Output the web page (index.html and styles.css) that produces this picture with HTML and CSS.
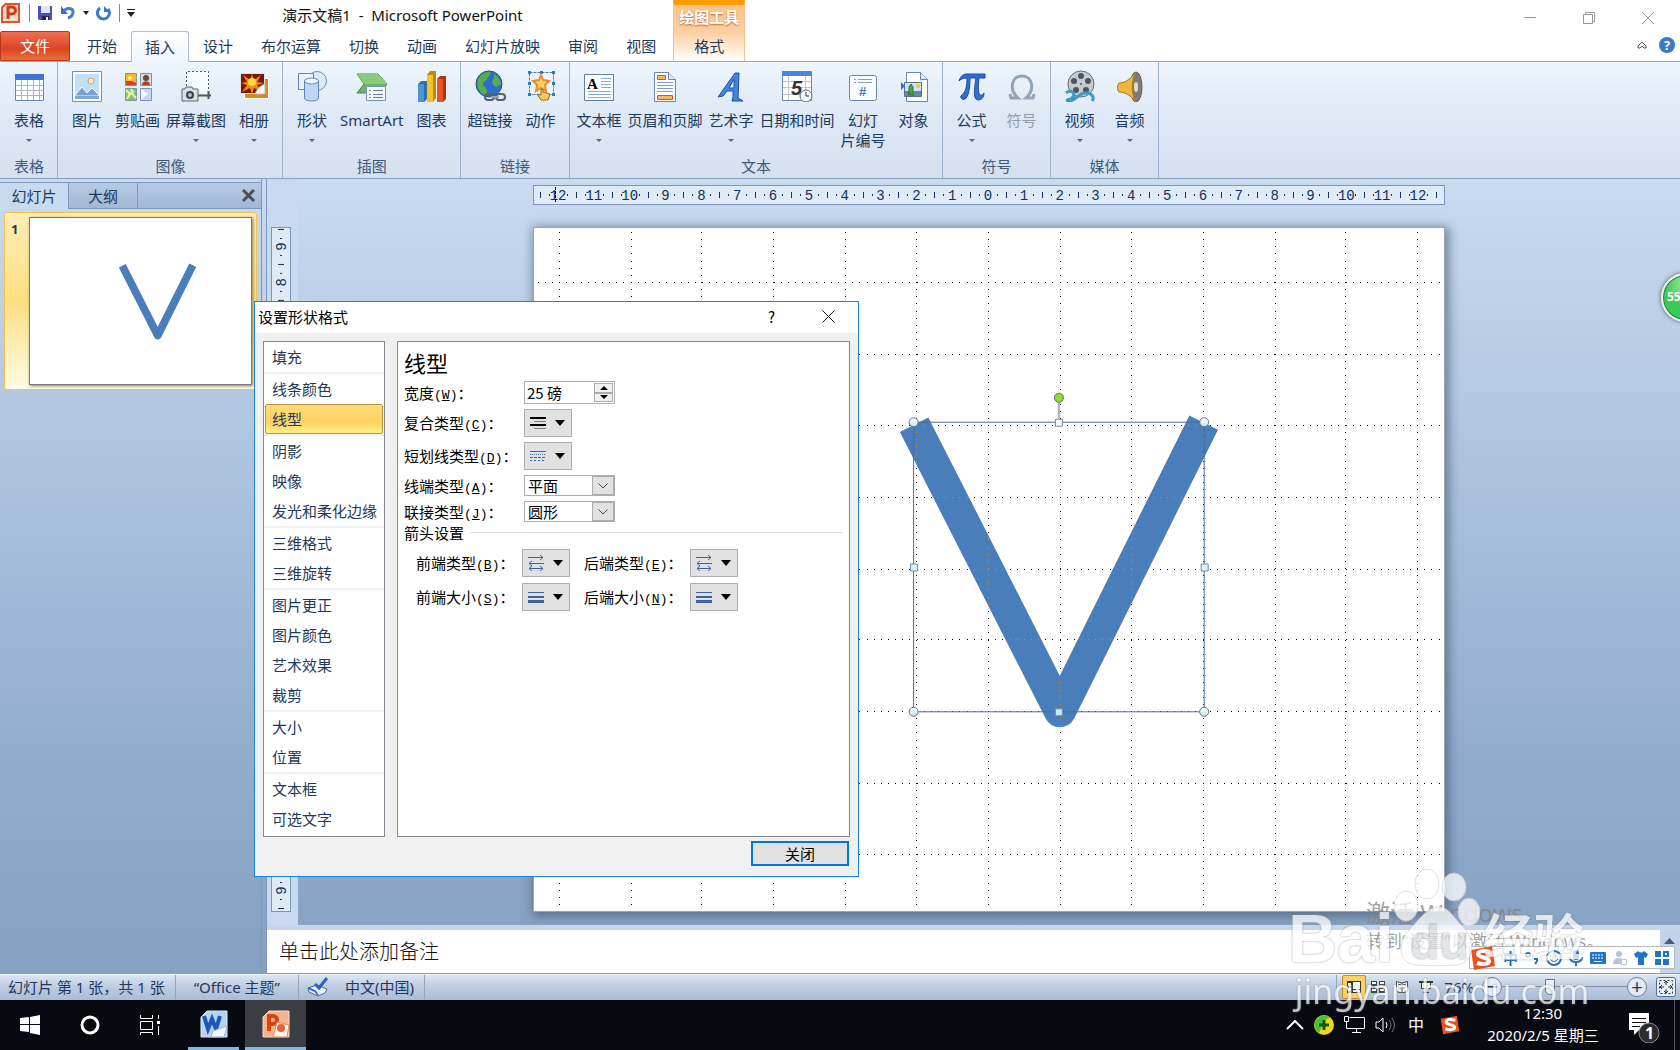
FILE: index.html
```html
<!DOCTYPE html>
<html lang="zh-CN">
<head>
    <meta charset="UTF-8">
    <meta name="viewport" content="width=device-width, initial-scale=1.0">
    <title>演示文稿1 - Microsoft PowerPoint</title>
    <link rel="stylesheet" href="styles.css">
</head>
<body>
    <header class="window-head">
        <div class="head-left">
            <div class="title-row">
                <div class="quick-access">
                    <svg width="22" height="22" viewBox="0 0 22 22"><path d="M5 1h15v20H1V5z" fill="#d9562e"/><path d="M6 3h12v16H3V6z" fill="#fbdccb"/><path d="M8 17V5h4a3 3 0 0 1 0 7H8" fill="none" stroke="#c8401a" stroke-width="3"/></svg>
                    <i class="qat-line"></i>
                    <button aria-label="保存"><svg width="16" height="16" viewBox="0 0 16 16"><path d="M1 1h14v14H2l-1-1z" fill="#4a50b8"/><path d="M4 1h9v7H4z" fill="#dfe6fa"/><path d="M5 11h7v4H5z" fill="#20245a"/><path d="M9 12h2v3H9z" fill="#fff"/></svg></button>
                    <button aria-label="撤消"><svg width="16" height="16" viewBox="0 0 16 16"><path d="M1 1v8h7z" fill="#3c6cc4"/><path d="M4 6c3-4 9-3 9 1 0 3-2 5-5 6" fill="none" stroke="#4a7ad0" stroke-width="3"/></svg></button>
                    <svg width="6" height="4" viewBox="0 0 6 4"><path d="M0 0h6L3 4z" fill="#222"/></svg>
                    <button aria-label="恢复"><svg width="16" height="16" viewBox="0 0 16 16"><path d="M4 3a6 6 0 1 0 8 1" fill="none" stroke="#3c78d0" stroke-width="3"/><path d="M8 1v6h6z" fill="#3c78d0"/></svg></button>
                    <i class="qat-line"></i>
                    <svg width="8" height="8" viewBox="0 0 8 8"><path d="M0 0h8v1H0zM0 3h8L4 8z" fill="#222"/></svg>
                </div>
                <h1 class="doc-title">演示文稿1&nbsp; -&nbsp; Microsoft PowerPoint</h1>
            </div>
            <nav class="tabs">
                <button class="tab tab-file">文件</button>
                <button class="tab">开始</button>
                <button class="tab tab-active">插入</button>
                <button class="tab">设计</button>
                <button class="tab">布尔运算</button>
                <button class="tab">切换</button>
                <button class="tab">动画</button>
                <button class="tab">幻灯片放映</button>
                <button class="tab">审阅</button>
                <button class="tab">视图</button>
            </nav>
        </div>
        <div class="context-tab">
            <span class="context-name">绘图工具</span>
            <button class="tab">格式</button>
        </div>
        <div class="head-right">
            <div class="window-buttons">
                <button aria-label="最小化"><svg width="12" height="12" viewBox="0 0 12 12"><path d="M0 5.500h12" stroke="#999"/></svg></button>
                <button aria-label="还原"><svg width="12" height="12" viewBox="0 0 12 12"><path d="M.5 2.500h9v9h-9zM2.500 2V.5h9v9H10" fill="none" stroke="#999"/></svg></button>
                <button aria-label="关闭窗口"><svg width="12" height="12" viewBox="0 0 12 12"><path d="M0 0l12 12M12 0L0 12" stroke="#999"/></svg></button>
            </div>
            <div class="help-buttons">
                <button aria-label="功能区最小化"><svg width="10" height="8" viewBox="0 0 10 8"><path d="M1 5l4-4 4 4v2H7L5 5 3 7H1z" fill="#fff" stroke="#555"/></svg></button>
                <button aria-label="帮助" class="help">?</button>
            </div>
        </div>
    </header>

    <!-- Ribbon -->
    <div class="ribbon">
        <section class="group">
            <div class="tools">
                <button class="tool">
                    <svg viewBox="0 0 32 32"><path d="M2.500 4.500h28v26h-28z" fill="#fff" stroke="#6b86ad"/><path d="M2 4h29v6H2z" fill="#3f76d6"/><path d="M8.500 10v20M14.500 10v20M20.500 10v20M26.500 10v20M3 15.500h27M3 20.500h27M3 25.500h27" stroke="#a9b4c6"/></svg>
                    <span>表格</span><i class="drop"></i>
                </button>
            </div>
            <h2>表格</h2>
        </section>
        <section class="group">
            <div class="tools">
                <button class="tool">
                    <svg viewBox="0 0 32 32"><path d="M1.500 1.500h29v30h-29z" fill="#fff" stroke="#6d92ae"/><path d="M4 4h24v25H4z" fill="#bfe0fb"/><circle cx="20" cy="11" r="3" fill="#fff4d8" stroke="#f09a50"/><path d="M4 25l7-8 5 6 5-5 7 7v1H4z" fill="#7d9ed8" stroke="#fff"/><path d="M4 26h24v3H4z" fill="#7ea9d6"/></svg>
                    <span>图片</span>
                </button>
                <button class="tool">
                    <svg viewBox="0 0 32 32"><path d="M3.500 3.500h11v12h-11z" fill="#ffb51f" stroke="#7e92aa"/><path d="M4 11h6l4 2v2H4z" fill="#d1401f"/><circle cx="8" cy="8" r="2" fill="#fff1a0"/><path d="M18.500 3.500h11v12h-11z" fill="#d9d9d9" stroke="#7e92aa"/><circle cx="24" cy="8" r="3" fill="#6e4a33"/><path d="M20 15c0-5 8-5 8 0z" fill="#b33b2a"/><path d="M3.500 18.500h11v12h-11z" fill="#7bbf77" stroke="#7e92aa"/><path d="M4 20l4 4-3 5M9 19l2 6 3 3M6 26l6-5" stroke="#f5efa0" stroke-width="2" fill="none"/><path d="M18.500 18.500h11v12h-11z" fill="#c4d5f7" stroke="#7e92aa"/><path d="M19 19l7 5-7 6z" fill="#f4f8ff"/></svg>
                    <span>剪贴画</span>
                </button>
                <button class="tool">
                    <svg viewBox="0 0 32 32"><path d="M6.500 16V1.500h22V25" fill="#f6f9fd" stroke="#555" stroke-dasharray="2 2"/><path d="M18 25.500h13M28.500 21v8" stroke="#555" stroke-width="2"/><path d="M2 19h3l1-2h6l1 2h5v12H2z" fill="#dadfe5" stroke="#5a6472"/><circle cx="10" cy="25" r="4" fill="#39424e"/><circle cx="10" cy="25" r="2" fill="#a9c0d8"/></svg>
                    <span>屏幕截图</span><i class="drop"></i>
                </button>
                <button class="tool">
                    <svg viewBox="0 0 32 32"><path d="M6.500 8.500h24v20h-24z" fill="#d98a1e" stroke="#fff"/><path d="M2.500 3.500h24v20h-24z" fill="#7a1a08" stroke="#dfe5ee"/><path d="M14 4l2 6 7-5-4 7 7 1-7 2 5 7-8-4-2 6-2-6-8 4 5-7-6-2 6-1-4-7 7 5z" fill="#f08a13"/><circle cx="14" cy="12" r="4" fill="#ffd83b"/><path d="M17 24q3-8 10-10v10z" fill="#f8f8f8" stroke="#bbb"/></svg>
                    <span>相册</span><i class="drop"></i>
                </button>
            </div>
            <h2>图像</h2>
        </section>
        <section class="group">
            <div class="tools">
                <button class="tool">
                    <svg viewBox="0 0 32 32"><circle cx="21" cy="11" r="9.500" fill="#dcebfa" stroke="#6b8fb8"/><path d="M2.500 3.500h15v16h-15z" fill="#eaf3fd" stroke="#5d84b4"/><path d="M8.500 11v17c0 4 14 4 14 0V11" fill="#bcd7f3" stroke="#5d84b4"/><ellipse cx="15.500" cy="11" rx="7" ry="3" fill="#eef6ff" stroke="#5d84b4"/></svg>
                    <span>形状</span><i class="drop"></i>
                </button>
                <button class="tool">
                    <svg viewBox="0 0 32 32"><path d="M1 4h21l9 10-7 9H1l7-9z" fill="#6fb463" stroke="#48893f"/><path d="M1 4h21l9 10H8z" fill="#8cc97e"/><path d="M10.500 16.500h19v14h-19z" fill="#f3f7fb" stroke="#7d92a8"/><path d="M13 20.500h2M17 20.500h10M13 24.500h2M17 24.500h10M13 27.500h2M17 27.500h10" stroke="#6d839b"/></svg>
                    <span>SmartArt</span>
                </button>
                <button class="tool">
                    <svg viewBox="0 0 32 32"><path d="M2 14l3-3h6v18l-3 3H2z" fill="#2e6fad"/><path d="M2 14h6v18H2z" fill="#4d93d1"/><path d="M11 5l3-4h6v27l-3 4h-6z" fill="#b98c0c"/><path d="M11 5h6v27h-6z" fill="#f3c321"/><path d="M21 9l3-3h6v23l-3 3h-6z" fill="#b7300f"/><path d="M21 9h6v23h-6z" fill="#e8542a"/></svg>
                    <span>图表</span>
                </button>
            </div>
            <h2>插图</h2>
        </section>
        <section class="group">
            <div class="tools">
                <button class="tool">
                    <svg viewBox="0 0 32 32"><circle cx="15" cy="14" r="13" fill="#2c6fcb" stroke="#2a4f7c"/><path d="M4 9c3-6 8-7 12-7 2 3-2 4-3 7s-4 2-4 5 4 3 4 7-2 4-3 4C5 22 2 16 4 9zM20 4c5 3 7 7 7 10l-5 3c-4-2-5-6-2-9z" fill="#58ad4e"/><rect x="11" y="24" width="9" height="6" rx="3" fill="none" stroke="#55606e" stroke-width="2"/><rect x="22" y="24" width="9" height="6" rx="3" fill="none" stroke="#55606e" stroke-width="2"/><path d="M17 27h8" stroke="#9aa6b4" stroke-width="2"/></svg>
                    <span>超链接</span>
                </button>
                <button class="tool">
                    <svg viewBox="0 0 32 32"><path d="M4.500 2.500h24v22h-24z" fill="#eef4fb" stroke="#4f7ea8" stroke-dasharray="3 1"/><path d="M3 1h3v3H3zM15 1h3v3h-3zM27 1h3v3h-3zM3 12h3v3H3zM27 12h3v3h-3zM3 23h3v3H3zM27 23h3v3h-3z" fill="#1f7fc4"/><path d="M16 5l2 5 6 1-4 4 1 6-5-3-5 3 1-6-4-4 6-1z" fill="#ffd45e" stroke="#ee8a2e" stroke-width="2"/><path d="M16 19v6l-4-1 4 6h7l2-6-7-2v-3z" fill="#f6c95c" stroke="#94691b"/></svg>
                    <span>动作</span>
                </button>
            </div>
            <h2>链接</h2>
        </section>
        <section class="group">
            <div class="tools">
                <button class="tool">
                    <svg viewBox="0 0 32 32"><path d="M1.500 4.500h29v26h-29z" fill="#fbfdff" stroke="#62809f"/><text x="4" y="19" class="ico-serif">A</text><path d="M18 8.500h10M18 11.500h10M18 14.500h10M18 17.500h10M5 21.500h23M5 24.500h23M5 27.500h23" stroke="#8ea9ce"/></svg>
                    <span>文本框</span><i class="drop"></i>
                </button>
                <button class="tool">
                    <svg viewBox="0 0 32 32"><path d="M5.500 2.500h14l7 7v22h-21z" fill="#fcfdff" stroke="#6a87a8"/><path d="M19.500 2.500v7h7" fill="#dfe9f5" stroke="#6a87a8"/><path d="M8.500 5.500h8v4h-8zM8.500 25.500h15v4h-15z" fill="#fbb860" stroke="#cf5a12"/><path d="M8 12.500h16M8 15.500h16M8 18.500h16M8 21.500h16" stroke="#7f9cc9"/></svg>
                    <span>页眉和页脚</span>
                </button>
                <button class="tool">
                    <svg viewBox="0 0 32 32"><path d="M3 27L20 3h4l-1 25 5 3H17l1-4v-6h-6l-4 5zM14 18h5V9z" fill="#3f86e0" stroke="#1f4f9e" fill-rule="evenodd"/></svg>
                    <span>艺术字</span><i class="drop"></i>
                </button>
                <button class="tool">
                    <svg viewBox="0 0 32 32"><path d="M1.500 1.500h29v29h-29z" fill="#fff" stroke="#7088a8"/><path d="M1 1h29v5H1z" fill="#4b84de"/><path d="M7.500 6v24M24.500 6v24M2 11.500h28M2 17.500h28M2 24.500h28" stroke="#bcc5d2"/><text x="10" y="25" class="ico-five">5</text><circle cx="25" cy="26" r="6" fill="#f4f8fc" stroke="#5c6d83"/><path d="M25 22v4h3" fill="none" stroke="#333"/></svg>
                    <span>日期和时间</span>
                </button>
                <button class="tool">
                    <svg viewBox="0 0 32 32"><rect x="2.500" y="5.500" width="27" height="25" rx="2" fill="#f8fbff" stroke="#6a86ac"/><path d="M7 9.500h2M11 9.500h14M7 12.500h2M11 12.500h14" stroke="#8a9bb5"/><text x="12" y="26" class="ico-hash">#</text></svg>
                    <span>幻灯<br>片编号</span>
                </button>
                <button class="tool">
                    <svg viewBox="0 0 32 32"><path d="M8.500 2.500h14l7 7v22h-21z" fill="#fcfdff" stroke="#6a87a8"/><path d="M22.500 2.500v7h7" fill="#dfe9f5" stroke="#6a87a8"/><path d="M6.500 12.500h17v14h-17z" fill="#cfe3fb" stroke="#54708e"/><path d="M7 21h16v5H7z" fill="#6885a8"/><circle cx="20" cy="16" r="2" fill="#f2c229"/><path d="M11 26v-9l2-3 2 3v9l-5-4" fill="#48a846" stroke="#2c6e36"/><path d="M3 12l4 4-4 4z" fill="#2f6ed0"/></svg>
                    <span>对象</span>
                </button>
            </div>
            <h2>文本</h2>
        </section>
        <section class="group">
            <div class="tools">
                <button class="tool">
                    <svg viewBox="0 0 32 32"><path d="M3 11c2-6 5-7 8-7h18v4h-6c-1 9-1 15 1 17 2 1 3-1 4-2 0 5-3 7-6 7-5-1-4-9-2-22h-6c0 12-2 19-5 21-3 1-5-1-4-3 5-4 6-10 6-18-4 0-6 1-8 3z" fill="#2f6ed0" stroke="#1e4c9c"/></svg>
                    <span>公式</span><i class="drop"></i>
                </button>
                <button class="tool tool-off" disabled>
                    <svg viewBox="0 0 32 32"><path d="M4 24l1 4h7c-9-8-7-22 4-22s13 14 4 22h7l1-4" fill="none" stroke="#93a3b8" stroke-width="3"/></svg>
                    <span>符号</span>
                </button>
            </div>
            <h2>符号</h2>
        </section>
        <section class="group">
            <div class="tools">
                <button class="tool">
                    <svg viewBox="0 0 32 32"><circle cx="17" cy="14" r="13" fill="#c6cbd1" stroke="#5f6870"/><g fill="#4c555e"><circle cx="17" cy="6" r="3"/><circle cx="24" cy="11" r="3"/><circle cx="22" cy="20" r="3"/><circle cx="12" cy="20" r="3"/><circle cx="10" cy="11" r="3"/><circle cx="17" cy="14" r="1"/></g><path d="M2 23c5-4 10 0 7 4s-8 2-5 4c8 1 10-8 17-8s10 4 7 8" fill="none" stroke="#4597c4" stroke-width="3"/></svg>
                    <span>视频</span><i class="drop"></i>
                </button>
                <button class="tool">
                    <svg viewBox="0 0 32 32"><ellipse cx="22" cy="17" rx="6" ry="15" fill="#7e7b78" stroke="#6a5b3c"/><path d="M5 13c7 0 12-5 17-11-5 8-5 22 0 30-5-6-10-10-17-10-2-2-2-7 0-9z" fill="#eeb63f" stroke="#a8791c"/><ellipse cx="22" cy="17" rx="2" ry="5" fill="#dedbd4"/></svg>
                    <span>音频</span><i class="drop"></i>
                </button>
            </div>
            <h2>媒体</h2>
        </section>
    </div>

    <!-- Work area -->
    <main class="work">
        <aside class="slides-pane">
            <div class="pane-tabs">
                <button class="pane-tab pane-tab-active">幻灯片</button>
                <button class="pane-tab">大纲</button>
                <button class="pane-close" aria-label="关闭窗格"><svg width="13" height="13" viewBox="0 0 13 13"><path d="M1 1l11 11M12 1L1 12" stroke="#4a4f57" stroke-width="3"/></svg></button>
            </div>
            <div class="thumb-row">
                <span class="thumb-num">1</span>
                <svg class="thumb" viewBox="0 0 910 684"><use href="#shape-v"/></svg>
            </div>
        </aside>
        <div class="editor">
            <div class="editor-grid">
                <div class="ruler-strip"></div>
                <svg class="ruler-h" id="ruler-h" viewBox="0 0 910 18"></svg>
                <svg class="ruler-v" id="ruler-v" viewBox="0 0 18 684"></svg>
                <svg class="slide" viewBox="0 0 910 684">
                    <defs>
                        <polyline id="shape-v" points="380,197 526,484 670,195" fill="none" stroke="#4a7ebb" stroke-width="32" stroke-linejoin="round"/>
                        <g id="grid-lines" stroke-dasharray="1 6.160" shape-rendering="crispEdges"></g>
                        <mask id="v-mask"><polyline points="380,197 526,484 670,195" fill="none" stroke="#fff" stroke-width="32" stroke-linejoin="round"/></mask>
                        <linearGradient id="handle" x2="0" y2="1"><stop offset="0" stop-color="#fff"/><stop offset="1" stop-color="#bfe9f2"/></linearGradient>
                    </defs>
                    <use href="#grid-lines" stroke="#000"/>
                    <use href="#shape-v"/>
                    <g mask="url(#v-mask)"><use href="#grid-lines" stroke="#d98a1f"/></g>
                    <path d="M379.500 194.500h291v290h-291z" fill="none" stroke="#4a6c9b"/>
                    <path d="M525 175v16" stroke="#9fb4cc" stroke-width="2"/>
                    <circle cx="525" cy="170" r="4.500" fill="#8be02a" stroke="#5d6670"/>
                    <g fill="url(#handle)" stroke="#66727e">
                        <circle cx="379.500" cy="194.500" r="4.500"/><circle cx="670.500" cy="194.500" r="4.500"/>
                        <circle cx="379.500" cy="484.500" r="4.500"/><circle cx="670.500" cy="484.500" r="4.500"/>
                    </g>
                    <g fill="url(#handle)" stroke="#6d8ba8">
                        <path d="M521.500 191.500h7v7h-7zM376.500 336.500h7v7h-7zM667.500 336.500h7v7h-7zM521.500 481.500h7v7h-7z"/>
                    </g>
                </svg>
            </div>
            <div class="notes">
                <p>单击此处添加备注</p>
                <div class="notes-scroll"><svg width="11" height="6" viewBox="0 0 11 6"><path d="M0 6l5.500-6L11 6z" fill="#4b5a80"/></svg></div>
            </div>
        </div>
    </main>

    <footer class="status">
        <span class="status-item">幻灯片 第 1 张，共 1 张</span>
        <span class="status-item status-theme">“Office 主题”</span>
        <span class="status-item status-lang"><svg width="22" height="20" viewBox="0 0 22 20"><path d="M1 11l9-3 10 4-2 4-7 3-9-4z" fill="#e9eef5" stroke="#56688c"/><path d="M1 11l7 3 3 4" fill="none" stroke="#3b6fd0" stroke-width="2"/><path d="M8 7l4 4 8-10" fill="none" stroke="#2f62c4" stroke-width="3"/></svg>中文(中国)</span>
        <div class="status-right">
            <button class="view view-on" aria-label="普通视图"><svg width="14" height="12" viewBox="0 0 14 12"><path d="M0 0h14v12H0z" fill="#333"/><path d="M1 2h3v3H1zM1 7h3v3H1zM6 1h7v7H6zM6 9h7v2H6z" fill="#fff"/></svg></button>
            <button class="view" aria-label="幻灯片浏览"><svg width="14" height="12" viewBox="0 0 14 12"><path d="M0 0h6v5H0zM8 0h6v5H8zM0 7h6v5H0zM8 7h6v5H8z" fill="#444"/><path d="M1 1h4v2H1zM9 1h4v2H9zM1 8h4v2H1zM9 8h4v2H9z" fill="#fff"/></svg></button>
            <button class="view" aria-label="阅读视图"><svg width="14" height="12" viewBox="0 0 14 12"><path d="M7 2L1.500.5v10L7 12l5.500-1.500V.5z" fill="#fff" stroke="#444"/><path d="M7 2v10M3 3l3 1M3 6l3 1M11 3L8 4M11 6L8 7" stroke="#444"/></svg></button>
            <button class="view" aria-label="幻灯片放映视图"><svg width="14" height="12" viewBox="0 0 14 12"><path d="M0 0h14v2H0z" fill="#333"/><path d="M2.500 2v5.500h9V2M7 8v3M4 11.500h6" fill="#fff" stroke="#333"/></svg></button>
            <span class="zoom-num">76%</span>
            <button class="zoom-btn" aria-label="缩小">−</button>
            <input class="zoom-range" type="range" min="0" max="125" value="47" aria-label="显示比例">
            <button class="zoom-btn" aria-label="放大">+</button>
            <button class="fit" aria-label="适应窗口"><svg width="20" height="20" viewBox="0 0 20 20"><rect x=".5" y=".5" width="19" height="19" rx="2" fill="#e9f0f8" stroke="#4470a6"/><path d="M3.500 3.500h13v13h-13z" fill="none" stroke="#333" stroke-dasharray="2 2"/><path d="M10 4v4M8 6l2-2 2 2M10 12v4M8 14l2 2 2-2M4 10h4M6 8l-2 2 2 2M12 10h4M14 8l2 2-2 2" fill="none" stroke="#333"/></svg></button>
        </div>
    </footer>

    <div class="taskbar">
        <button class="task" aria-label="开始菜单"><svg width="20" height="20" viewBox="0 0 20 20"><path d="M0 3l9-1v7H0zM10 2l10-2v9H10zM0 10h9v7l-9-1zM10 10h10v10l-10-2z" fill="#fff"/></svg></button>
        <button class="task" aria-label="Cortana"><svg width="20" height="20" viewBox="0 0 20 20"><circle cx="10" cy="10" r="8" fill="none" stroke="#fff" stroke-width="3"/></svg></button>
        <button class="task" aria-label="任务视图"><svg width="20" height="20" viewBox="0 0 20 20"><path d="M.5 0v3.500h12V0M.5 6.500h12v8H.5zM.5 20v-2.500h12V20M18.500 0v4M18.500 11v9" fill="none" stroke="#fff"/><path d="M17 6h3v3h-3z" fill="#fff"/></svg></button>
        <button class="task task-app" aria-label="Word"><svg width="28" height="28" viewBox="0 0 28 28"><path d="M7 1h20v26H1V7z" fill="#b7d3f3" stroke="#dbe9f8"/><path d="M4 6l4 13 4-10 4 10 4-13" fill="none" stroke="#1e55b8" stroke-width="4"/><path d="M13 21l14-5-3 11H11z" fill="#f2f7fd" stroke="#9bb7dc"/></svg></button>
        <button class="task task-app task-on" aria-label="PowerPoint"><svg width="28" height="28" viewBox="0 0 28 28"><path d="M7 1h20v26H1V7z" fill="#f6b48e" stroke="#fbd9c6"/><path d="M7 21V6h4a4 4 0 0 1 0 8H7" fill="none" stroke="#d8440f" stroke-width="4"/><path d="M15 12l12 3-2 12H11z" fill="#fff3ec" stroke="#e08a64"/><circle cx="19" cy="18" r="4" fill="#ea6237"/></svg></button>
        <div class="tray">
            <svg width="18" height="10" viewBox="0 0 18 10"><path d="M1 9l8-8 8 8" fill="none" stroke="#fff" stroke-width="2"/></svg>
            <svg width="20" height="20" viewBox="0 0 20 20"><circle cx="10" cy="10" r="10" fill="#f5d21c"/><path d="M1 14A10 10 0 0 1 17 3c-8-1-9 10-12 15z" fill="#4fbe32"/><path d="M10 5v10M5 10h10" stroke="#0a5a1a" stroke-width="3"/></svg>
            <svg width="21" height="18" viewBox="0 0 21 18"><path d="M5.500 1.500h15v11H2.500V7M12.500 13v3M8 16.500h9M.5.5h4v5h-4zM2.500 6v3" fill="none" stroke="#fff"/></svg>
            <svg width="21" height="18" viewBox="0 0 21 18"><path d="M1 6h3l4-4v14l-4-4H1z" fill="none" stroke="#fff"/><path d="M11 6q2 3 0 6" fill="none" stroke="#fff"/><path d="M14 4q4 5 0 10M17 2q5 7 0 14" fill="none" stroke="#777"/></svg>
            <span class="tray-lang">中</span>
            <svg class="sogou" width="20" height="20" viewBox="0 0 26 26"><use href="#sogou-s"/></svg>
        </div>
        <div class="clock">12:30<br>2020/2/5 星期三</div>
        <button class="notify" aria-label="通知"><svg width="32" height="32" viewBox="0 0 32 32"><path d="M1 2h20v17h-10l-5 5v-5H1z" fill="#fff"/><path d="M4 7.500h14M4 11.500h14M4 15.500h8" stroke="#111"/><circle cx="21" cy="22" r="10" fill="#2a2b2e" stroke="#8a8a8a"/><text x="17" y="28" class="ico-one">1</text></svg></button>
    </div>

    <!-- Format shape dialog -->
    <form class="dialog" role="dialog" aria-label="设置形状格式">
        <div class="dialog-title">
            <span>设置形状格式</span>
            <button type="button" class="dialog-help" aria-label="对话框帮助">?</button>
            <button type="button" aria-label="关闭对话框"><svg width="13" height="13" viewBox="0 0 13 13"><path d="M.5.5l12 12M12.500.5l-12 12" stroke="#111"/></svg></button>
        </div>
        <div class="dialog-body">
            <ul class="pages">
                <li><button type="button">填充</button></li>
                <li class="sep"><button type="button">线条颜色</button></li>
                <li><button type="button" class="page-on">线型</button></li>
                <li class="sep"><button type="button">阴影</button></li>
                <li><button type="button">映像</button></li>
                <li><button type="button">发光和柔化边缘</button></li>
                <li class="sep"><button type="button">三维格式</button></li>
                <li><button type="button">三维旋转</button></li>
                <li class="sep"><button type="button">图片更正</button></li>
                <li><button type="button">图片颜色</button></li>
                <li><button type="button">艺术效果</button></li>
                <li><button type="button">裁剪</button></li>
                <li class="sep"><button type="button">大小</button></li>
                <li><button type="button">位置</button></li>
                <li class="sep"><button type="button">文本框</button></li>
                <li><button type="button">可选文字</button></li>
            </ul>
            <div class="page">
                <h2>线型</h2>
                <div class="fields">
                    <label for="width">宽度<span class="key">(<u>W</u>)</span>：</label>
                    <div class="spin">
                        <input type="text" id="width" value="25 磅">
                        <div class="spin-buttons">
                            <button type="button" aria-label="增大"><svg width="8" height="4" viewBox="0 0 8 4"><path d="M0 4l4-4 4 4z"/></svg></button>
                            <button type="button" aria-label="减小"><svg width="8" height="4" viewBox="0 0 8 4"><path d="M0 0h8L4 4z"/></svg></button>
                        </div>
                    </div>
                    <label for="compound">复合类型<span class="key">(<u>C</u>)</span>：</label>
                    <button type="button" id="compound" class="pick"><svg width="16" height="12" viewBox="0 0 16 12"><path d="M0 1h16M0 8h16" stroke="#000" stroke-width="2"/><path d="M4 4.500h12M4 11.500h12" stroke="#6f7f7a"/></svg><i></i></button>
                    <label for="dash">短划线类型<span class="key">(<u>D</u>)</span>：</label>
                    <button type="button" id="dash" class="pick"><svg width="16" height="12" viewBox="0 0 16 12"><path d="M0 1.500h16" stroke="#3d63a8"/><path d="M0 4.500h16" stroke="#3d63a8" stroke-dasharray="1 1"/><path d="M0 7.500h16" stroke="#3d63a8" stroke-dasharray="3 1"/><path d="M0 10.500h16" stroke="#3d63a8" stroke-dasharray="2 2"/></svg><i></i></button>
                    <label for="cap">线端类型<span class="key">(<u>A</u>)</span>：</label>
                    <div class="combo"><select id="cap"><option>平面</option></select><span><svg width="10" height="6" viewBox="0 0 10 6"><path d="M.5.5L5 5 9.500.5" fill="none" stroke="#444"/></svg></span></div>
                    <label for="join">联接类型<span class="key">(<u>J</u>)</span>：</label>
                    <div class="combo"><select id="join"><option>圆形</option></select><span><svg width="10" height="6" viewBox="0 0 10 6"><path d="M.5.5L5 5 9.500.5" fill="none" stroke="#444"/></svg></span></div>
                </div>
                <h3>箭头设置</h3>
                <div class="arrows">
                    <label for="begin-type">前端类型<span class="key">(<u>B</u>)</span>：</label>
                    <button type="button" id="begin-type" class="pick"><svg width="16" height="16" viewBox="0 0 16 16"><use href="#arrow-types"/></svg><i></i></button>
                    <label for="end-type">后端类型<span class="key">(<u>E</u>)</span>：</label>
                    <button type="button" id="end-type" class="pick"><svg width="16" height="16" viewBox="0 0 16 16"><use href="#arrow-types"/></svg><i></i></button>
                    <label for="begin-size">前端大小<span class="key">(<u>S</u>)</span>：</label>
                    <button type="button" id="begin-size" class="pick"><svg width="16" height="12" viewBox="0 0 16 12"><use href="#arrow-sizes"/></svg><i></i></button>
                    <label for="end-size">后端大小<span class="key">(<u>N</u>)</span>：</label>
                    <button type="button" id="end-size" class="pick"><svg width="16" height="12" viewBox="0 0 16 12"><use href="#arrow-sizes"/></svg><i></i></button>
                </div>
            </div>
        </div>
        <div class="dialog-foot"><button type="button" class="close-btn">关闭</button></div>
    </form>

    <div class="speed-ball">55</div>

    <div class="activate">
        <p class="activate-head">激活 Windows</p>
        <p>转到“设置”以激活 Windows。</p>
    </div>

    <!-- Input method bar -->
    <div class="ime">
        <svg class="ime-logo" width="26" height="26" viewBox="0 0 26 26"><g id="sogou-s"><path d="M1 5l21-4 3 20-21 4z" fill="#f0501e"/><path d="M20 7C13 5 8 6 8 9c0 4 11 3 11 7 0 3-6 4-12 2" fill="none" stroke="#fff" stroke-width="4"/></g></svg>
        <span class="ime-lang">中</span>
        <svg width="14" height="14" viewBox="0 0 14 14"><circle cx="3" cy="4" r="2" fill="none" stroke="#1f74c6" stroke-width="2"/><path d="M9 8h3v2l-2 3" fill="none" stroke="#1f74c6" stroke-width="2"/></svg>
        <svg width="16" height="16" viewBox="0 0 16 16"><circle cx="8" cy="8" r="7" fill="none" stroke="#1f74c6" stroke-width="2"/><path d="M4 9q4 5 8 0M5 5v2M11 5v2" fill="none" stroke="#1f74c6"/></svg>
        <svg width="14" height="16" viewBox="0 0 14 16"><rect x="4" y="0" width="6" height="10" rx="3" fill="#1f74c6"/><path d="M1 7q0 5 6 5t6-5M7 12v4" fill="none" stroke="#1f74c6" stroke-width="2"/></svg>
        <svg width="16" height="12" viewBox="0 0 16 12"><rect width="16" height="12" rx="1" fill="#1f74c6"/><path d="M2 3h12M2 6h12" stroke="#fff" stroke-dasharray="2 1"/><path d="M4 9.500h8" stroke="#fff"/></svg>
        <svg width="14" height="16" viewBox="0 0 14 16"><circle cx="6" cy="4" r="3" fill="#b4c4da"/><path d="M0 14q0-6 6-6t6 6z" fill="#b4c4da"/><path d="M8.500 9.500h5v5h-5z" fill="#fff" stroke="#b4c4da"/></svg>
        <svg width="14" height="14" viewBox="0 0 14 14"><path d="M4 0q3 3 6 0l4 3-2 4-2-1v8H4V6L2 7 0 3z" fill="#1f74c6"/></svg>
        <svg width="14" height="14" viewBox="0 0 14 14"><path d="M0 0h6v6H0zM0 8h6v6H0zM8 8h6v6H8z" fill="#1f74c6"/><path d="M9 1h4v4H9z" fill="none" stroke="#1f74c6" stroke-width="2"/></svg>
    </div>

    <div class="baidu">
        <div class="baidu-logo">
            <span>Bai</span>
            <svg width="86" height="100" viewBox="0 0 86 100">
                <g fill="#fff" stroke="#d4d4d4">
                    <ellipse cx="12" cy="38" rx="12" ry="15"/><ellipse cx="33" cy="16" rx="12" ry="15"/><ellipse cx="60" cy="19" rx="12" ry="14"/><ellipse cx="75" cy="44" rx="11" ry="14"/>
                    <path d="M45 39c10 0 15 11 24 20 12 12 12 36-6 38-12 1-28 1-42 0C3 95 4 73 16 61c10-10 17-22 29-22z"/>
                </g>
                <text x="16" y="91" class="baidu-du">du</text>
            </svg>
            <span class="baidu-cn">经验</span>
        </div>
        <p>jingyan.baidu.com</p>
    </div>

    <svg class="defs" width="0" height="0" viewBox="0 0 16 16">
        <defs>
            <g id="arrow-types" fill="none" stroke="#41639f"><path d="M0 2.500h15M12 0l3 2.500-3 2.500M1 8.500h15M4 6L1 8.500 4 11M1 13.500h14M4 11l-3 2.500L4 16M12 11l3 2.500-3 2.500"/></g>
            <g id="arrow-sizes" fill="#41639f"><path d="M0 1h16v1H0zM0 5h16v2H0zM0 9h16v3H0z"/></g>
        </defs>
    </svg>

    <script>
        // One centimetre on the slide
        const unit = 35.83;

        // Horizontal ruler
        let marks = '';
        for (let i = -12; i <= 12; i++) {
            const x = 454 + i * unit;
            marks += `<text x="${x}" y="14">${Math.abs(i)}</text>`;
        }
        for (let i = -50; i <= 50; i++) {
            const x = Math.round(454 + i * unit / 4);
            if (i % 4 === 0) continue;
            marks += i % 2 === 0 ? `<rect x="${x}" y="6" width="1" height="6"/>` : `<rect x="${x}" y="8" width="1" height="2"/>`;
        }
        document.getElementById('ruler-h').innerHTML = marks + '<path d="M21.500 1v16" stroke="#000" stroke-dasharray="3 1"/>';

        // Vertical ruler
        marks = '';
        for (let i = -9; i <= 9; i++) {
            const y = 341 + i * unit;
            marks += `<text x="0" y="5" transform="translate(9 ${y}) rotate(-90)">${Math.abs(i)}</text>`;
        }
        for (let i = -38; i <= 38; i++) {
            const y = Math.round(341 + i * unit / 4);
            if (i % 4 === 0) continue;
            marks += i % 2 === 0 ? `<rect x="6" y="${y}" width="6" height="1"/>` : `<rect x="8" y="${y}" width="2" height="1"/>`;
        }
        document.getElementById('ruler-v').innerHTML = marks;

        // Dotted grid, every two centimetres
        let lines = '';
        for (let i = 0; i < 13; i++) {
            const x = Math.round(24 + i * unit * 2) + 0.5;
            lines += `<path d="M${x} 4V684"/>`;
        }
        for (let i = 0; i < 9; i++) {
            const y = Math.round(54 + i * unit * 2) + 0.5;
            lines += `<path d="M3 ${y}H910"/>`;
        }
        document.getElementById('grid-lines').innerHTML = lines;
    </script>
</body>
</html>
```
FILE: styles.css
```css
/* General Styles */
* {
    box-sizing: border-box;
}

body {
    margin: 0;
    height: 100vh;
    display: flex;
    flex-direction: column;
    overflow: hidden;
    position: relative;
    font-family: "Noto Sans", "Noto Sans CJK SC", sans-serif;
    font-size: 15px;
    line-height: 20px;
    color: #1e395b;
    background: #fff;
}

button, input, select {
    font: inherit;
    color: inherit;
    margin: 0;
    padding: 0;
    border: 0;
    background: none;
}

h1, h2, h3, p, ul {
    margin: 0;
    padding: 0;
    font-weight: normal;
    list-style: none;
}

svg {
    display: block;
    flex: none;
}

/* Title bar and tabs */
.window-head {
    display: flex;
    height: 62px;
    flex: none;
    border-bottom: 1px solid #98a9c1;
}

.head-left {
    display: flex;
    flex-direction: column;
    padding-right: 3px;
}

.title-row {
    display: flex;
    height: 31px;
    align-items: center;
}

.quick-access {
    display: flex;
    align-items: center;
    gap: 7px;
    width: 135px;
    padding-bottom: 4px;
}

.qat-line {
    width: 1px;
    height: 18px;
    background: #888;
}

.doc-title {
    flex: 1;
    text-align: center;
    font-size: 15px;
    color: #111;
}

.tabs {
    display: flex;
    height: 31px;
}

.tab {
    padding: 0 14px;
    white-space: nowrap;
}

.tab-file {
    width: 70px;
    margin-right: 3px;
    color: #fff;
    border: 1px solid #b5381b;
    border-radius: 2px 2px 0 0;
    background: linear-gradient(#ee6f50, #dc4423 60%, #e8703c);
}

.tab-active {
    border: 1px solid #b2bfd1;
    border-bottom: 0;
    margin-bottom: -1px;
    padding: 0 13px;
    border-radius: 3px 3px 0 0;
    background: linear-gradient(#fff, #eef5fd);
}

.context-tab {
    display: flex;
    flex-direction: column;
    width: 72px;
    border-top: 5px solid #ff9c00;
    background: linear-gradient(#fdc38a, #fdd0a5 50%, #fff);
    border-left: 1px solid #f6c08c;
    border-right: 1px solid #f6c08c;
}

.context-name {
    height: 26px;
    line-height: 24px;
    text-align: center;
    color: #fff;
    font-weight: bold;
    text-shadow: 0 1px 2px #b5622b;
}

.context-tab .tab {
    flex: 1;
    padding: 0;
}

.head-right {
    flex: 1;
}

.window-buttons, .help-buttons {
    display: flex;
    justify-content: flex-end;
    align-items: center;
}

.window-buttons {
    height: 36px;
    gap: 47px;
    padding-right: 26px;
}

.help-buttons {
    gap: 12px;
    padding-right: 5px;
    height: 18px;
}

.help {
    width: 16px;
    height: 16px;
    border-radius: 8px;
    line-height: 16px;
    font-size: 13px;
    font-weight: bold;
    color: #fff;
    background: #3e76cc;
}

/* Ribbon */
.ribbon {
    display: flex;
    height: 117px;
    flex: none;
    background: linear-gradient(#eef5fd, #dce8f5 50%, #d5e1ef);
    border-bottom: 1px solid #8ba0bc;
}

.group {
    display: flex;
    flex-direction: column;
    justify-content: space-between;
    padding: 0 3px 2px 4px;
    border-right: 1px solid #9fb2cb;
}

.group h2 {
    font-size: 15px;
    line-height: 20px;
    text-align: center;
    color: #42587b;
}

.tools {
    display: flex;
}

.tool {
    display: flex;
    flex-direction: column;
    align-items: center;
    min-width: 50px;
    height: 90px;
    padding: 8px 2px 0;
    white-space: nowrap;
}

.tool svg {
    width: 32px;
    height: 32px;
    margin-bottom: 8px;
}

.tool span {
    padding: 0 1px;
}

.tool-off {
    color: #8d9db2;
}

.drop {
    margin-top: 9px;
    border: 3px solid transparent;
    border-top: 3px solid #5d6876;
    border-bottom: 0;
}

.ico-serif {
    font: bold 15px "Liberation Serif", serif;
}

.ico-five {
    font: italic bold 20px "Liberation Sans", sans-serif;
    fill: #333;
}

.ico-hash {
    font: bold 13px "Liberation Sans", sans-serif;
    fill: #4670b8;
}

.ico-one {
    font: bold 16px "Noto Sans", sans-serif;
    fill: #fff;
}

/* Work area */
.work {
    flex: 1;
    min-height: 0;
    display: flex;
    background: linear-gradient(#c9dbf0, #b9cde5 20%, #90abcb 75%, #86a0c0);
}

.slides-pane {
    width: 262px;
    padding-top: 3px;
    border-right: 1px solid #8098bd;
}

.pane-tabs {
    display: flex;
    height: 27px;
    border-top: 1px solid #7f99bd;
    background: linear-gradient(#b6cae3, #a2b8d4);
    border-bottom: 1px solid #7f99bd;
}

.pane-tab {
    width: 69px;
    border-right: 1px solid #7f99bd;
}

.pane-tab-active {
    margin-bottom: -1px;
    background: #c8daf0;
}

.pane-close {
    margin-left: auto;
    padding: 0 6px;
}

.thumb-row {
    display: flex;
    margin: 3px 4px;
    padding: 4px;
    border: 1px solid #f2c34b;
    border-radius: 3px;
    background: linear-gradient(#fdeeb5, #fddf80 50%, #fffbe6);
}

.thumb-num {
    width: 20px;
    padding: 2px 0 0 2px;
    font-size: 13px;
    font-weight: bold;
}

.thumb {
    flex: 1;
    min-width: 0;
    background: #fff;
    border: 1px solid #777c82;
    box-shadow: 1px 1px 3px #8a7d4c;
}

.editor {
    flex: 1;
    min-width: 0;
    display: flex;
    flex-direction: column;
    margin-left: 4px;
    border-left: 1px solid #8098bd;
}

.editor-grid {
    flex: 1;
    min-height: 0;
    display: grid;
    grid-template-columns: 31px 236fr 910fr 236fr;
    grid-template-rows: 49px 1fr 14px;
}

.ruler-strip {
    grid-column: 1;
    grid-row: 1 / 4;
    background: #c9daf0;
}

.ruler-h, .ruler-v {
    background: #dfeaf7;
    outline: 1px solid #7c95b8;
    fill: #12305c;
    font-family: "Liberation Mono", monospace;
    font-size: 14px;
    text-anchor: middle;
}

.ruler-h {
    grid-column: 3;
    grid-row: 1;
    width: 100%;
    height: 18px;
    margin-top: 7px;
}

.ruler-v {
    grid-column: 1;
    grid-row: 2;
    width: 18px;
    height: 100%;
    margin-left: 5px;
}

.slide {
    grid-column: 3;
    grid-row: 2;
    width: 100%;
    height: 100%;
    background: #fff;
    outline: 1px solid #9aa5b4;
    box-shadow: 2px 2px 10px 3px rgba(50, 65, 90, 0.55);
}

.notes {
    display: flex;
    height: 49px;
    flex: none;
    border-top: 5px solid #c5d6eb;
    border-bottom: 1px solid #8098bd;
    background: #fff;
    color: #111;
}

.notes p {
    flex: 1;
    padding: 11px 12px;
    font-family: "Noto Sans CJK SC", sans-serif;
    font-size: 20px;
    font-weight: 300;
}

.notes-scroll {
    width: 20px;
    padding: 8px 4px;
    background: #c3d4ea;
}

/* Status bar */
.status {
    display: flex;
    height: 26px;
    flex: none;
    align-items: center;
    padding-bottom: 2px;
    background: linear-gradient(#dbe6f3, #bccbdf 50%, #a9bdd6);
    border-top: 1px solid #eef3fa;
}

.status-item {
    display: flex;
    align-items: center;
    gap: 16px;
    height: 24px;
    padding: 0 10px 0 8px;
    border-right: 1px solid #8fa4c0;
}

.status-theme {
    padding: 0 18px;
}

.status-right {
    display: flex;
    align-items: center;
    margin-left: auto;
    padding: 0 4px 0 5px;
    border-left: 1px solid #8fa4c0;
}

.view {
    display: grid;
    place-items: center;
    width: 24px;
    height: 24px;
}

.view-on {
    border: 1px solid #c28a30;
    border-radius: 2px;
    background: #fcd45c;
}

.zoom-num {
    padding: 0 8px 0 6px;
}

.zoom-btn {
    width: 20px;
    height: 20px;
    border: 1px solid #667d9e;
    border-radius: 10px;
    line-height: 18px;
    font-size: 20px;
    background: #e3ebf5;
}

.zoom-range {
    appearance: none;
    width: 125px;
    height: 20px;
    background: linear-gradient(#7c90ad, #7c90ad) center / 100% 1px no-repeat;
}

.zoom-range::-webkit-slider-thumb {
    appearance: none;
    width: 10px;
    height: 16px;
    border: 1px solid #60779a;
    border-radius: 0 0 5px 5px;
    background: #eaf0f8;
}

.fit {
    margin-left: 9px;
}

/* Taskbar */
.taskbar {
    display: flex;
    height: 50px;
    flex: none;
    background: #070a11;
    color: #fff;
}

.task {
    display: grid;
    place-items: center;
    width: 60px;
}

.task-app {
    margin-left: 8px;
    width: 51px;
    border-bottom: 3px solid #76b9ed;
}

.task-on {
    margin-left: 6px;
    width: 61px;
    background: #3a3d42;
}

.tray {
    display: flex;
    align-items: center;
    gap: 10px;
    margin-left: auto;
}

.tray-lang {
    width: 20px;
    text-align: center;
    font-size: 16px;
}

.sogou {
    margin-left: 4px;
}

.clock {
    width: 168px;
    padding: 2px 2px 0 0;
    text-align: center;
    line-height: 22px;
}

.notify {
    padding: 4px 14px 0 0;
    border-right: 1px solid #555;
    margin-right: 5px;
}

/* Format shape dialog */
.dialog {
    position: absolute;
    left: 254px;
    top: 301px;
    width: 605px;
    border: 1px solid #1883d7;
    background: #f0f0f0;
    color: #000;
    font-family: "Noto Sans CJK SC", sans-serif;
}

.dialog-title {
    display: flex;
    align-items: center;
    gap: 47px;
    height: 31px;
    padding: 0 23px 2px 3px;
    background: #fff;
}

.dialog-title span {
    flex: 1;
}

.dialog-body {
    display: flex;
    gap: 12px;
    padding: 8px 8px 4px;
}

.pages {
    width: 122px;
    padding-bottom: 2px;
    border: 1px solid #828790;
    background: #fff;
    color: #1e395b;
}

.pages button {
    display: block;
    width: 118px;
    height: 30px;
    margin-left: 1px;
    padding: 0 0 1px 7px;
    text-align: left;
    white-space: nowrap;
}

.pages .sep {
    border-top: 2px solid #eff0f5;
}

.pages .page-on {
    padding-left: 6px;
    border: 1px solid #c2913a;
    border-radius: 2px;
    background: linear-gradient(#ffdc7c, #fed160 60%, #fff08a);
}

.page {
    flex: 1;
    padding: 6px;
    border: 1px solid #828790;
    background: #fff;
}

.page h2 {
    height: 33px;
    font-size: 22px;
    line-height: 28px;
}

.page label {
    height: 20px;
}

.key {
    font-family: "Liberation Mono", monospace;
    font-size: 13px;
}

.fields {
    display: grid;
    grid-template-columns: 120px 91px;
    row-gap: 5px;
    align-items: center;
}

.spin, .combo {
    display: flex;
    border: 1px solid #abadb3;
}

.spin {
    height: 23px;
    padding: 1px;
}

.spin input {
    flex: 1;
    min-width: 0;
    padding-left: 1px;
}

.spin-buttons {
    display: flex;
    flex-direction: column;
    width: 19px;
}

.spin-buttons button {
    display: grid;
    place-items: center;
    flex: 1;
    border: 1px solid #acacac;
    background: #f0f0f0;
}

.combo {
    height: 21px;
}

.combo select {
    flex: 1;
    appearance: none;
    padding-left: 3px;
    line-height: 18px;
}

.combo span {
    display: grid;
    place-items: center;
    width: 22px;
    border: 1px solid #acacac;
    background: #e1e1e1;
}

.pick {
    display: flex;
    align-items: center;
    justify-content: space-between;
    width: 48px;
    height: 28px;
    padding: 0 6px 0 5px;
    border: 1px solid #adadad;
    background: #e1e1e1;
}

.pick i {
    border: 5px solid transparent;
    border-top: 6px solid #000;
    border-bottom: 0;
}

.page h3 {
    display: flex;
    align-items: center;
    gap: 6px;
    height: 21px;
    font-size: 15px;
}

.page h3::after {
    content: "";
    flex: 1;
    height: 1px;
    background: #dcdcdc;
}

.arrows {
    display: grid;
    grid-template-columns: 106px 62px 106px 48px;
    row-gap: 6px;
    align-items: center;
    padding: 6px 0 0 12px;
}

.dialog-foot {
    display: flex;
    justify-content: flex-end;
    padding: 0 9px 10px;
}

.close-btn {
    width: 98px;
    height: 25px;
    border: 2px solid #0078d7;
    background: #e1e1e1;
}

/* Overlays */
.speed-ball {
    position: absolute;
    right: -30px;
    top: 273px;
    width: 49px;
    height: 49px;
    padding-left: 4px;
    border: 2px solid #eee;
    border-radius: 25px;
    line-height: 44px;
    font-size: 12px;
    font-weight: bold;
    color: #fff;
    background: radial-gradient(circle at 50% 20%, #9be89b, #3fc85a 50%);
    box-shadow: 0 0 4px #555, inset 0 0 0 1px #14863c;
}

.activate {
    position: absolute;
    right: 80px;
    bottom: 99px;
    width: 234px;
    color: rgba(130, 130, 130, 0.75);
    font-size: 18px;
    white-space: nowrap;
}

.activate-head {
    font-size: 24px;
    line-height: 36px;
}

.ime {
    position: absolute;
    right: 5px;
    bottom: 81px;
    display: flex;
    align-items: center;
    justify-content: space-between;
    width: 206px;
    height: 23px;
    padding-right: 5px;
    border: 1px solid #b3b8c2;
    background: #fff;
}

.ime-lang {
    color: #1f74c6;
    font-weight: bold;
    font-size: 15px;
}

.baidu {
    position: absolute;
    right: 84px;
    bottom: 36px;
    width: 308px;
    color: #fff;
    opacity: 0.75;
    text-shadow: 0 0 2px #777;
    font-family: "Liberation Sans", "Noto Sans CJK SC", sans-serif;
}

.baidu-logo {
    display: flex;
    align-items: flex-end;
    font-size: 68px;
    font-weight: bold;
    line-height: 60px;
}

.baidu-cn {
    font-size: 50px;
    line-height: 58px;
    margin-left: 4px;
}

.baidu-du {
    font: bold 48px "Liberation Sans", sans-serif;
    fill: #dcdfe3;
}

.baidu p {
    font-family: "Noto Sans", sans-serif;
    font-size: 34px;
    line-height: 46px;
    text-align: center;
}

.defs {
    position: absolute;
}
```
